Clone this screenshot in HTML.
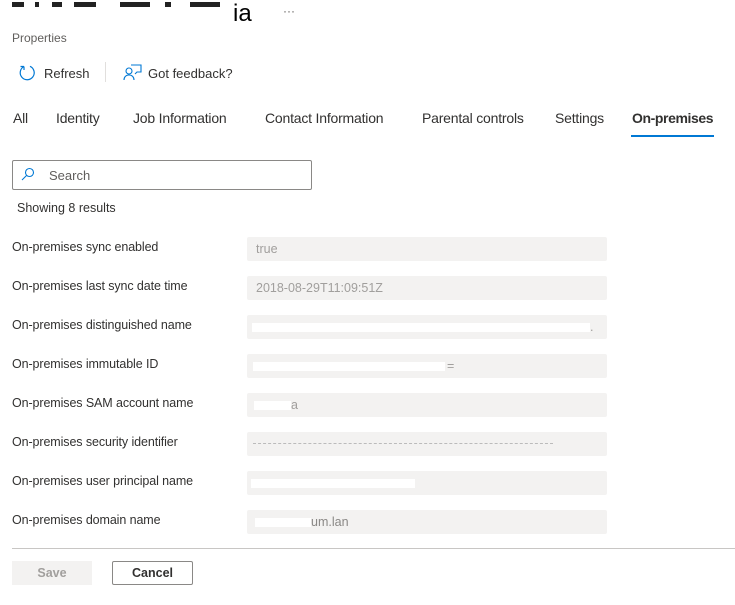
<!DOCTYPE html><html><head><style>
body{margin:0;width:735px;height:605px;background:#fff;font-family:"Liberation Sans",sans-serif;color:#323130;position:relative;overflow:hidden}
.a{position:absolute;white-space:nowrap}
.f{position:absolute;left:247px;width:360px;height:24px;background:#f3f2f1;border-radius:2px;font-size:12.5px;color:#a19f9d;line-height:24px;padding-left:9px;box-sizing:border-box}
.w{position:absolute;background:#fff;height:9px;top:8px}
.l{position:absolute;left:12px;font-size:12.5px;letter-spacing:-0.1px}
.t{position:absolute;top:110px;font-size:14px;letter-spacing:-0.2px}
.d{position:absolute;top:2px;height:5px;background:#222}
</style></head><body>
<div class="d" style="left:12px;width:12px"></div><div class="d" style="left:35px;width:4px"></div><div class="d" style="left:52px;width:10px"></div><div class="d" style="left:74px;width:22px"></div><div class="d" style="left:120px;width:30px"></div><div class="d" style="left:165px;width:6px"></div><div class="d" style="left:190px;width:30px"></div>
<div class="a" style="left:233px;top:0px;font-size:24px;color:#000;line-height:28px">ia</div>
<div class="a" style="left:283px;top:4px;font-size:12px;color:#605e5c">···</div>
<div class="a" style="left:12px;top:31px;font-size:12px;color:#605e5c">Properties</div>
<svg class="a" style="left:19px;top:64px" width="18" height="18" viewBox="0 0 18 18"><path d="M5 2.5A7 7 0 1 0 11 2.3M5 2.5V6M5 2.5H1.5" fill="none" stroke="#0078d4" stroke-width="1.2"/></svg>
<div class="a" style="left:44px;top:66px;font-size:13px">Refresh</div>
<div class="a" style="left:105px;top:62px;width:1px;height:20px;background:#e1dfdd"></div>
<svg class="a" style="left:123px;top:63px" width="19" height="18" viewBox="0 0 19 18"><circle cx="6" cy="8" r="3" fill="none" stroke="#0078d4" stroke-width="1.1"/><path d="M1 17c0-3 2-5 5-5s5 2 5 5M8 2h10v7h-4l-2 2" fill="none" stroke="#0078d4" stroke-width="1.1"/></svg>
<div class="a" style="left:148px;top:66px;font-size:13px">Got feedback?</div>
<div class="t" style="left:13px">All</div><div class="t" style="left:56px">Identity</div><div class="t" style="left:133px">Job Information</div><div class="t" style="left:265px">Contact Information</div><div class="t" style="left:422px">Parental controls</div><div class="t" style="left:555px">Settings</div><div class="t" style="left:632px;font-weight:bold;letter-spacing:-0.4px">On-premises</div>
<div class="a" style="left:631px;top:135px;width:83px;height:2px;background:#0078d4"></div>
<div class="a" style="left:12px;top:160px;width:298px;height:28px;border:1px solid #8a8886;border-radius:2px"></div>
<svg class="a" style="left:21px;top:167px" width="14" height="14" viewBox="0 0 14 14"><circle cx="8.5" cy="5.5" r="4" fill="none" stroke="#0078d4" stroke-width="1.1"/><path d="M5.5 8.5L1 13" stroke="#0078d4" stroke-width="1.1"/></svg>
<div class="a" style="left:49px;top:168px;font-size:13px;color:#605e5c">Search</div>
<div class="a" style="left:17px;top:201px;font-size:12.5px">Showing 8 results</div>
<div class="l" style="top:240px">On-premises sync enabled</div><div class="f" style="top:237px">true</div>
<div class="l" style="top:279px">On-premises last sync date time</div><div class="f" style="top:276px">2018-08-29T11:09:51Z</div>
<div class="l" style="top:318px">On-premises distinguished name</div><div class="f" style="top:315px"><span class="w" style="left:5px;width:338px"></span><span style="position:absolute;left:343px">.</span></div>
<div class="l" style="top:357px">On-premises immutable ID</div><div class="f" style="top:354px"><span style="position:absolute;left:200px">=</span><span class="w" style="left:6px;width:192px"></span></div>
<div class="l" style="top:396px">On-premises SAM account name</div><div class="f" style="top:393px"><span class="w" style="left:7px;width:37px"></span><span style="position:absolute;left:44px">a</span></div>
<div class="l" style="top:435px">On-premises security identifier</div><div class="f" style="top:432px"><span style="position:absolute;left:6px;width:300px;top:11px;border-top:1px dashed #bbb"></span></div>
<div class="l" style="top:474px">On-premises user principal name</div><div class="f" style="top:471px"><span class="w" style="left:4px;width:164px"></span></div>
<div class="l" style="top:513px">On-premises domain name</div><div class="f" style="top:510px"><span class="w" style="left:8px;width:56px"></span><span style="position:absolute;left:64px;color:#8a8886">um.lan</span></div>
<div class="a" style="left:12px;top:548px;width:723px;height:1px;background:#c8c6c4"></div>
<div class="a" style="left:12px;top:561px;width:80px;height:24px;background:#f3f2f1;color:#a19f9d;font-size:12.5px;font-weight:bold;text-align:center;line-height:24px">Save</div>
<div class="a" style="left:112px;top:561px;width:79px;height:22px;border:1px solid #8a8886;border-radius:2px;font-size:12.5px;font-weight:bold;text-align:center;line-height:22px">Cancel</div>
</body></html>
